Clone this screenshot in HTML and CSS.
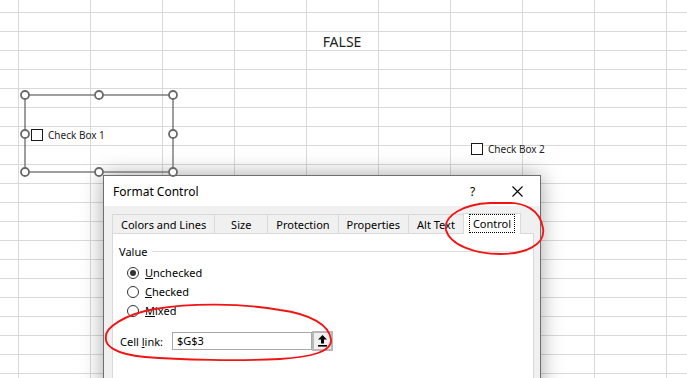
FILE: index.html
```html
<!DOCTYPE html>
<html lang="en">

<head>
    <meta charset="UTF-8">
    <meta name="viewport" content="width=device-width, initial-scale=1.0">
    <title>Format Control</title>
    <link rel="stylesheet" href="styles.css">
</head>

<body>
    <div class="sheet">
        <div class="cell-value">FALSE</div>

        <div class="sheet-check check-1"><span class="check-box"></span><span>Check Box 1</span></div>
        <div class="sheet-check check-2"><span class="check-box"></span><span>Check Box 2</span></div>

        <div class="dialog">
            <div class="dialog-title">
                <span class="title-text">Format Control</span>
                <span class="title-btn">?</span>
                <span class="title-btn">
                    <svg width="11" height="11" viewBox="0 0 11 11">
                        <path d="M0.5 0.5 L10.5 10.5 M10.5 0.5 L0.5 10.5" stroke="#000" stroke-width="1.1" fill="none" />
                    </svg>
                </span>
            </div>

            <div class="dialog-body">
                <div class="tabs">
                    <div class="tab">Colors and Lines</div>
                    <div class="tab">Size</div>
                    <div class="tab">Protection</div>
                    <div class="tab">Properties</div>
                    <div class="tab">Alt Text</div>
                    <div class="tab active"><span class="focus">Control</span></div>
                </div>

                <div class="tab-panel">
                    <div class="group-title"><span>Value</span></div>
                    <div class="radio checked"><span class="radio-dot"></span><span><u>U</u>nchecked</span></div>
                    <div class="radio"><span class="radio-dot"></span><span><u>C</u>hecked</span></div>
                    <div class="radio"><span class="radio-dot"></span><span><u>M</u>ixed</span></div>

                    <div class="link-row">
                        <span class="link-label">Cell <u>l</u>ink:</span>
                        <div class="ref-input">$G$3</div>
                        <div class="ref-btn">
                            <svg width="9" height="12" viewBox="0 0 9 12">
                                <path d="M4.5 0 L9 4.5 H6 V8.5 H3 V4.5 H0 Z" fill="#000" />
                                <rect x="0" y="10" width="9" height="1.6" fill="#000" />
                            </svg>
                        </div>
                    </div>
                </div>
            </div>
        </div>

        <!-- selection frame of Check Box 1 -->
        <svg class="overlay" width="687" height="378" viewBox="0 0 687 378">
            <rect x="25" y="95" width="148" height="77" fill="none" stroke="#6a6a6a" stroke-width="1.3" />
            <g fill="#fff" stroke="#6a6a6a" stroke-width="1.8">
                <circle cx="25" cy="95" r="4" />
                <circle cx="99" cy="95" r="4" />
                <circle cx="173" cy="95" r="4" />
                <circle cx="25" cy="134" r="4" />
                <circle cx="173" cy="134" r="4" />
                <circle cx="25" cy="172" r="4" />
                <circle cx="99" cy="172" r="4" />
                <circle cx="173" cy="172" r="4" />
            </g>
        </svg>

        <!-- red pen marks -->
        <svg class="overlay" width="687" height="378" viewBox="0 0 687 378">
            <g fill="none" stroke="#f21414" stroke-width="1.8" stroke-linecap="round">
                <path d="M505 203 C525 202, 540 210, 543 228 C546 245, 525 254, 500 254 C475 254, 450 245, 446 230 C443 215, 465 204, 490 203 L512 203" />
                <path d="M106 338 C104 328, 125 314, 155 309 C190 303, 240 303, 280 310 C310 314, 330 325, 331 340 C332 352, 310 357, 280 359 C240 361, 180 360, 145 357 C115 354, 104 346, 106 336" />
            </g>
        </svg>
    </div>
</body>

</html>
```

FILE: styles.css
```css
body {
    margin: 0;
    overflow: hidden;
    font-family: "Noto Sans", "Liberation Sans", sans-serif;
    color: #000;
}

.sheet {
    position: relative;
    width: 687px;
    height: 378px;
    overflow: hidden;
    background-color: #fff;
    background-image:
        linear-gradient(to right, #d9d9d9 1px, transparent 1px),
        linear-gradient(to bottom, #d9d9d9 1px, transparent 1px);
    background-size: 72px 19px;
    background-position: 18px 12px;
}

.cell-value {
    position: absolute;
    left: 306px;
    top: 32px;
    width: 72px;
    height: 19px;
    line-height: 19px;
    text-align: center;
    font-size: 14px;
    color: #222;
}

/* form controls drawn on the sheet */
.sheet-check {
    position: absolute;
    display: flex;
    align-items: center;
    gap: 5px;
    font-size: 10px;
    color: #222;
}

.check-1 {
    left: 31px;
    top: 128px;
}

.check-2 {
    left: 471px;
    top: 142px;
}

.check-box {
    width: 12px;
    height: 12px;
    box-sizing: border-box;
    border: 1px solid #1a1a1a;
    background-color: #fff;
}

.overlay {
    position: absolute;
    left: 0;
    top: 0;
    pointer-events: none;
}

/* dialog window */
.dialog {
    position: absolute;
    left: 103px;
    top: 175px;
    width: 438px;
    height: 240px;
    box-sizing: border-box;
    border: 1px solid #6e6e6e;
    background-color: #f0f0f0;
    box-shadow: 0 0 20px rgba(0, 0, 0, 0.35);
}

.dialog-title {
    display: flex;
    align-items: center;
    height: 30px;
    padding-left: 9px;
    background-color: #fff;
    font-size: 12px;
}

.title-text {
    flex: 1;
}

.title-btn {
    display: flex;
    align-items: center;
    justify-content: center;
    width: 45px;
    height: 30px;
    font-size: 12px;
}

.dialog-body {
    padding: 7px 6px 0 8px;
    font-size: 11px;
}

.tabs {
    display: flex;
    align-items: flex-end;
}

.tab {
    height: 18px;
    min-width: 36px;
    padding: 0 8px;
    line-height: 20px;
    text-align: center;
    border: 1px solid #d9d9d9;
    border-bottom: none;
    margin-right: -1px;
    background-color: #f0f0f0;
}

.tab.active {
    position: relative;
    height: 20px;
    margin-bottom: -1px;
    padding: 0 6px;
    line-height: 20px;
    background-color: #fff;
}

.focus {
    padding: 1px 3px;
    outline: 1px dotted #000;
}

.tab-panel {
    height: 200px;
    padding: 9px 6px 0 6px;
    border: 1px solid #d9d9d9;
    background-color: #fff;
}

.group-title {
    display: flex;
    align-items: center;
    height: 16px;
}

.group-title::after {
    content: "";
    flex: 1;
    margin-left: 5px;
    border-top: 1px solid #dcdcdc;
}

.radio {
    display: flex;
    align-items: center;
    gap: 6px;
    height: 19px;
    padding-left: 8px;
}

.group-title + .radio {
    margin-top: 4px;
}

.radio-dot {
    display: flex;
    align-items: center;
    justify-content: center;
    width: 12px;
    height: 12px;
    box-sizing: border-box;
    border: 1px solid #333;
    border-radius: 50%;
    background-color: #fff;
}

.radio.checked .radio-dot::after {
    content: "";
    width: 6px;
    height: 6px;
    border-radius: 50%;
    background-color: #333;
}

.link-row {
    display: flex;
    align-items: center;
    margin-top: 11px;
    padding-left: 1px;
}

.link-label {
    width: 52px;
}

.ref-input {
    width: 140px;
    height: 18px;
    box-sizing: border-box;
    padding-left: 4px;
    line-height: 16px;
    border: 1px solid #a8a8a8;
    background-color: #fff;
}

.ref-btn {
    display: flex;
    align-items: center;
    justify-content: center;
    width: 21px;
    height: 20px;
    box-sizing: border-box;
    border: 2px solid #b8b8b8;
    background-color: #f0f0f0;
}
```
